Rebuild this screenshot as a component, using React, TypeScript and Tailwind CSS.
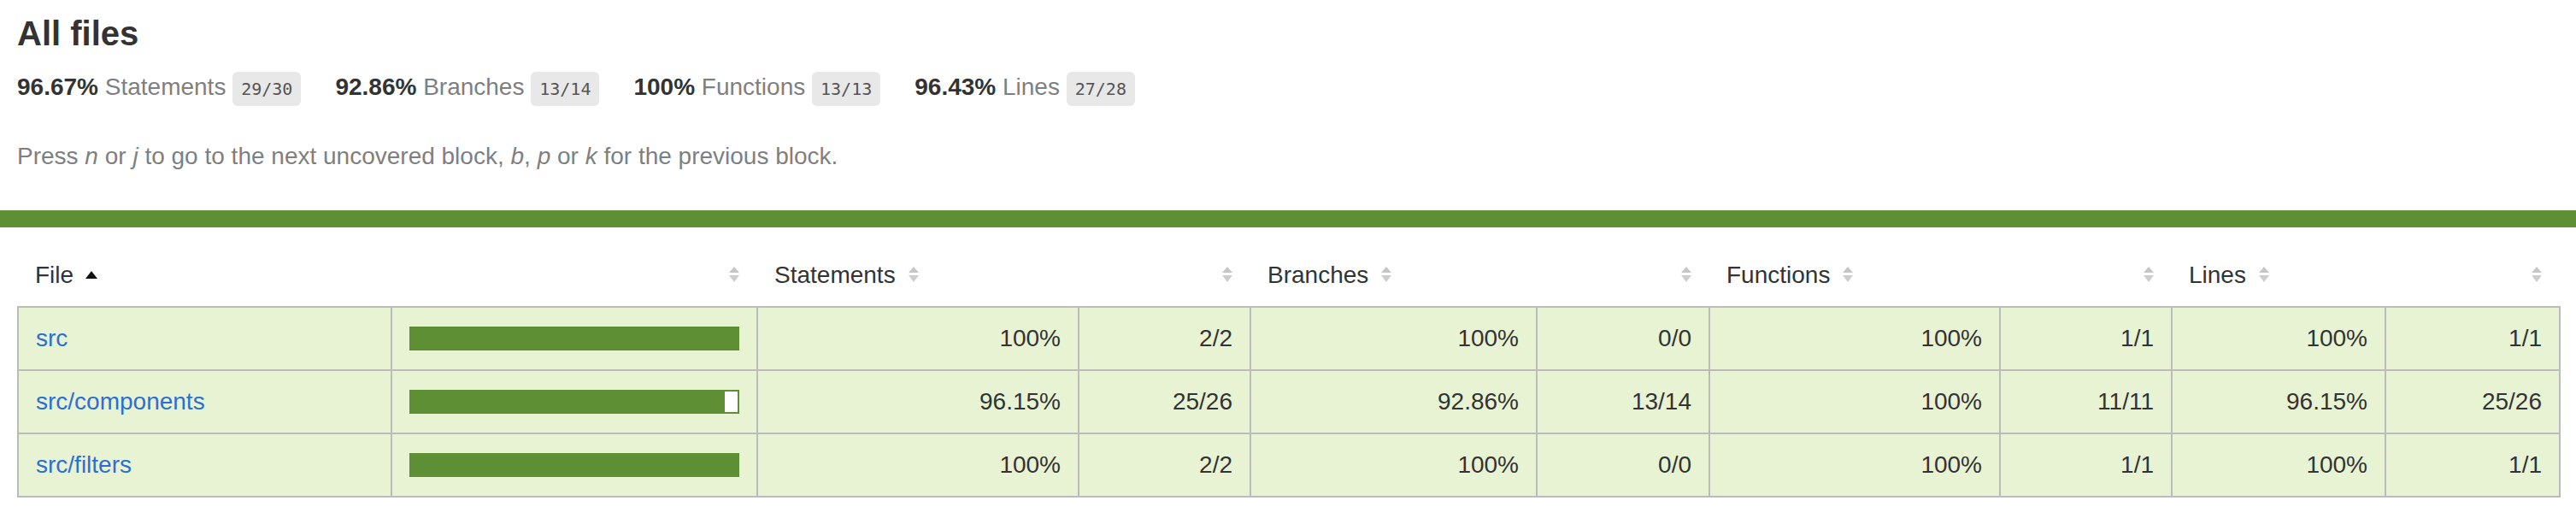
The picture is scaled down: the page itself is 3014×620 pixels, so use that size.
import React from "react";

const stats = [
  { pct: "96.67%", label: "Statements", frac: "29/30" },
  { pct: "92.86%", label: "Branches", frac: "13/14" },
  { pct: "100%", label: "Functions", frac: "13/13" },
  { pct: "96.43%", label: "Lines", frac: "27/28" },
];

const rows = [
  { file: "src", fill: 100, s: ["100%", "2/2"], b: ["100%", "0/0"], f: ["100%", "1/1"], l: ["100%", "1/1"] },
  { file: "src/components", fill: 96, s: ["96.15%", "25/26"], b: ["92.86%", "13/14"], f: ["100%", "11/11"], l: ["96.15%", "25/26"] },
  { file: "src/filters", fill: 100, s: ["100%", "2/2"], b: ["100%", "0/0"], f: ["100%", "1/1"], l: ["100%", "1/1"] },
];

function Sorter({ sorted }: { sorted?: boolean }) {
  return (
    <span className="inline-block w-[14px] h-[20px] ml-[14px]">
      {sorted ? (
        <svg width="14" height="20" viewBox="0 0 14 20">
          <path d="M7 6 L14 15 L0 15 Z" fill="#111" />
        </svg>
      ) : (
        <svg width="14" height="20" viewBox="0 0 14 20">
          <path d="M7 1 L13 8 L1 8 Z" fill="#c6c6c6" />
          <path d="M1 11 L13 11 L7 19 Z" fill="#cdcdcd" />
        </svg>
      )}
    </span>
  );
}

function Chart({ fill }: { fill: number }) {
  return (
    <div className="flex h-[28px] mt-[2px] border-2 border-[#5f8f34]">
      <div className="bg-[#5f8f34] h-full" style={{ width: `${fill}%` }} />
      {fill < 100 && <div className="bg-white h-full" style={{ width: `${100 - fill}%` }} />}
    </div>
  );
}

const td = "px-[20px] py-[20px] border-r-2 border-[#bbb] text-right align-top";

export default function App() {
  return (
    <div className="bg-white text-[#333] font-['Liberation_Sans',Arial,sans-serif] text-[28px] leading-[32px] w-[3014px] h-[620px]">
      <div className="px-[20px] pt-[16px] pb-[47px]">
        <h1 className="text-[40px] leading-[46px] font-bold">All files</h1>
        <div className="flex mt-[24px]">
          {stats.map((s) => (
            <div key={s.label} className="pr-[40px] whitespace-nowrap">
              <span className="font-bold">{s.pct} </span>
              <span className="text-[#7f7f7f]">{s.label}</span>{" "}
              <span className="font-['DejaVu_Sans_Mono',monospace] text-[20px] leading-none text-[#555] bg-[#e8e8e8] px-[10px] py-[8px] rounded-[6px] align-middle">
                {s.frac}
              </span>
            </div>
          ))}
        </div>
        <p className="mt-[49px] text-[#7f7f7f]">
          Press <em>n</em> or <em>j</em> to go to the next uncovered block, <em>b</em>, <em>p</em> or <em>k</em> for the
          previous block.
        </p>
      </div>
      <div className="h-[20px] bg-[#5f8f34]" />
      <div className="p-[20px]">
        <table className="w-full table-fixed border-collapse">
          <colgroup>
            <col className="w-[437px]" />
            <col className="w-[428px]" />
            <col className="w-[376px]" />
            <col className="w-[201px]" />
            <col className="w-[335px]" />
            <col className="w-[202px]" />
            <col className="w-[340px]" />
            <col className="w-[201px]" />
            <col className="w-[250px]" />
            <col className="w-[204px]" />
          </colgroup>
          <thead>
            <tr className="border-b-2 border-[#bbb]">
              <th className="p-[20px] text-left font-normal whitespace-nowrap">
                File<Sorter sorted />
              </th>
              <th className="p-[20px] text-right font-normal"><Sorter /></th>
              <th className="p-[20px] text-left font-normal whitespace-nowrap">Statements<Sorter /></th>
              <th className="p-[20px] text-right font-normal"><Sorter /></th>
              <th className="p-[20px] text-left font-normal whitespace-nowrap">Branches<Sorter /></th>
              <th className="p-[20px] text-right font-normal"><Sorter /></th>
              <th className="p-[20px] text-left font-normal whitespace-nowrap">Functions<Sorter /></th>
              <th className="p-[20px] text-right font-normal"><Sorter /></th>
              <th className="p-[20px] text-left font-normal whitespace-nowrap">Lines<Sorter /></th>
              <th className="p-[20px] text-right font-normal"><Sorter /></th>
            </tr>
          </thead>
          <tbody className="border-2 border-[#bbb]">
            {rows.map((r) => (
              <tr key={r.file} className="border-b-2 border-[#bbb] bg-[#e8f3d4]">
                <td className="px-[20px] py-[20px] border-r-2 border-[#bbb] text-left whitespace-nowrap align-top">
                  <a href="#" className="text-[#2b6fd5]">{r.file}</a>
                </td>
                <td className="px-[20px] py-[20px] border-r-2 border-[#bbb] align-top">
                  <Chart fill={r.fill} />
                </td>
                <td className={td}>{r.s[0]}</td>
                <td className={td}>{r.s[1]}</td>
                <td className={td}>{r.b[0]}</td>
                <td className={td}>{r.b[1]}</td>
                <td className={td}>{r.f[0]}</td>
                <td className={td}>{r.f[1]}</td>
                <td className={td}>{r.l[0]}</td>
                <td className="px-[20px] py-[20px] text-right align-top">{r.l[1]}</td>
              </tr>
            ))}
          </tbody>
        </table>
      </div>
    </div>
  );
}
